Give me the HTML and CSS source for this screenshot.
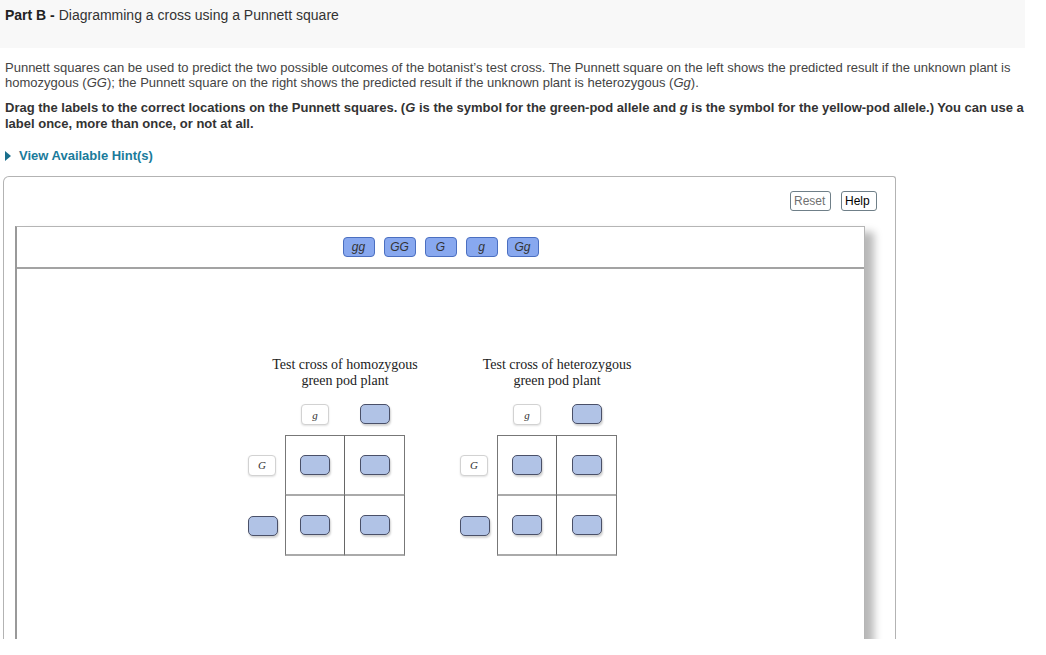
FILE: index.html
```html
<!DOCTYPE html>
<html>
<head>
<meta charset="utf-8">
<link rel="stylesheet" href="styles.css">
</head>
<body>
<div class="part-header"><b>Part B -</b> Diagramming a cross using a Punnett square</div>
<div class="content">
  <p class="intro">Punnett squares can be used to predict the two possible outcomes of the botanist’s test cross. The Punnett square on the left shows the predicted result if the unknown plant is homozygous (<i>GG</i>); the Punnett square on the right shows the predicted result if the unknown plant is heterozygous (<i>Gg</i>).</p>
  <p class="instr">Drag the labels to the correct locations on the Punnett squares. (<i>G</i> is the symbol for the green-pod allele and <i>g</i> is the symbol for the yellow-pod allele.) You can use a label once, more than once, or not at all.</p>
  <div class="hint"><span class="tri"></span>View Available Hint(s)</div>
  <div class="widget">
    <div class="buttons">
      <span class="btn btn-reset">Reset</span>
      <span class="btn btn-help">Help</span>
    </div>
    <div class="canvas">
      <div class="toolbar">
        <span class="chip"><i>gg</i></span>
        <span class="chip"><i>GG</i></span>
        <span class="chip"><i>G</i></span>
        <span class="chip"><i>g</i></span>
        <span class="chip"><i>Gg</i></span>
      </div>
      <div class="diagram">
        <div class="punnett">
          <div class="title"><span>Test cross of homozygous<br>green pod plant</span></div>
          <div class="head h1"><span class="lbl"><i>g</i></span></div>
          <div class="head h2"><span class="drop"></span></div>
          <div class="rowhead r1"><span class="lbl"><i>G</i></span></div>
          <div class="rowhead r2"><span class="drop"></span></div>
          <div class="cell c-tl"><span class="drop"></span></div>
          <div class="cell c-tr"><span class="drop"></span></div>
          <div class="cell c-bl"><span class="drop"></span></div>
          <div class="cell c-br"><span class="drop"></span></div>
        </div>
        <div class="punnett">
          <div class="title"><span>Test cross of heterozygous<br>green pod plant</span></div>
          <div class="head h1"><span class="lbl"><i>g</i></span></div>
          <div class="head h2"><span class="drop"></span></div>
          <div class="rowhead r1"><span class="lbl"><i>G</i></span></div>
          <div class="rowhead r2"><span class="drop"></span></div>
          <div class="cell c-tl"><span class="drop"></span></div>
          <div class="cell c-tr"><span class="drop"></span></div>
          <div class="cell c-bl"><span class="drop"></span></div>
          <div class="cell c-br"><span class="drop"></span></div>
        </div>
      </div>
    </div>
  </div>
</div>
</body>
</html>
```

FILE: styles.css
```css
html, body {
  margin: 0;
  padding: 0;
  background: #fff;
  overflow: hidden;
}
body {
  font-family: "Liberation Sans", Arial, sans-serif;
  color: #333;
  width: 1046px;
  height: 655px;
}
.part-header {
  width: 1025px;
  height: 48px;
  box-sizing: border-box;
  background: #f8f8f8;
  padding: 6px 5px 0;
  font-size: 14px;
  line-height: 18px;
  color: #333;
}
.part-header b { color: #222; }
.content {
  padding: 12px 0 0 5px;
  width: 1020px;
}
.intro {
  margin: 0;
  font-size: 13px;
  line-height: 15px;
  color: #444;
}
.instr {
  margin: 10px 0 0;
  font-size: 13px;
  line-height: 16px;
  font-weight: bold;
  color: #333;
}
.hint {
  margin-top: 16px;
  display: flex;
  align-items: center;
  font-size: 13px;
  font-weight: bold;
  color: #1a7b9b;
  line-height: 16px;
}
.tri {
  width: 0;
  height: 0;
  border-top: 5px solid transparent;
  border-bottom: 5px solid transparent;
  border-left: 6px solid #1a6f8c;
  margin-right: 8px;
}
.widget {
  margin: 12px 0 0 -2px;
  width: 893px;
  height: 463px;
  box-sizing: border-box;
  border: 1px solid #b3b3b3;
  border-bottom: none;
  border-top-left-radius: 6px;
  border-top-right-radius: 3px;
  padding: 14px 0 0 11px;
  overflow: hidden;
}
.buttons {
  display: flex;
  justify-content: flex-end;
  gap: 10px;
  padding-right: 18px;
  height: 20px;
}
.btn {
  box-sizing: border-box;
  height: 20px;
  border: 1px solid #6f7f88;
  border-radius: 3px;
  font-size: 12px;
  line-height: 18px;
  padding: 0 3px;
  background: #fff;
}
.btn-reset { color: #707070; width: 41px; }
.btn-help { color: #000; width: 36px; font-weight: 500; }
.canvas {
  margin-top: 15px;
  width: 850px;
  height: 520px;
  box-sizing: border-box;
  border: 1px solid #b5b5b5;
  border-left: 2px solid #999;
  box-shadow: 9px 6px 8px rgba(0,0,0,0.28);
  background: #fff;
}
.toolbar {
  height: 42px;
  box-sizing: border-box;
  border-bottom: 2px solid #a3a3a3;
  display: flex;
  justify-content: center;
  align-items: center;
  gap: 9px;
}
.chip {
  box-sizing: border-box;
  width: 32px;
  height: 20px;
  background: #88a8ef;
  border: 1px solid #4b6fc0;
  border-radius: 4px;
  font-size: 12px;
  color: #333;
  display: flex;
  align-items: center;
  justify-content: center;
}
.diagram {
  display: flex;
  gap: 55px;
  padding: 88px 0 0 231px;
}
.punnett {
  display: grid;
  grid-template-columns: 37px 60px 60px;
  grid-template-rows: 32px 15px 20px 11px 60px 61px;
}
.title {
  grid-column: 2 / 4;
  grid-row: 1;
  display: flex;
  justify-content: center;
  font-family: "Liberation Serif", "Times New Roman", serif;
  font-size: 14px;
  line-height: 16px;
  color: #222;
  white-space: nowrap;
  text-align: center;
}
.head {
  grid-row: 3;
  display: flex;
  justify-content: center;
}
.h1 { grid-column: 2; }
.h2 { grid-column: 3; }
.rowhead {
  grid-column: 1;
  display: flex;
  align-items: center;
}
.r1 { grid-row: 5; }
.r2 { grid-row: 6; }
.cell {
  display: flex;
  align-items: center;
  justify-content: center;
  box-sizing: border-box;
}
.c-tl { grid-row: 5; grid-column: 2; border-top: 1px solid #777; border-left: 1px solid #777; border-right: 1px solid #666; border-bottom: 2px solid #aaa; margin-bottom: -1px; }
.c-tr { grid-row: 5; grid-column: 3; border-top: 1px solid #777; border-right: 1px solid #777; border-bottom: 2px solid #aaa; margin-bottom: -1px; }
.c-bl { grid-row: 6; grid-column: 2; border-left: 1px solid #777; border-right: 1px solid #666; border-bottom: 2px solid #aaa; padding-top: 1px; }
.c-br { grid-row: 6; grid-column: 3; border-right: 1px solid #777; border-bottom: 2px solid #aaa; padding-top: 1px; }
.lbl {
  box-sizing: border-box;
  width: 28px;
  height: 21px;
  background: #fff;
  border: 1px solid #d2d2d2;
  border-radius: 4px;
  box-shadow: 0 1px 2px rgba(0,0,0,0.12);
  display: flex;
  align-items: center;
  justify-content: center;
  font-family: "Liberation Serif", "Times New Roman", serif;
  font-size: 11px;
  color: #333;
}
.drop {
  box-sizing: border-box;
  width: 30px;
  height: 20px;
  background: #b1c3e6;
  border: 1px solid #4a5068;
  border-radius: 5px;
  box-shadow: 1px 2px 2px rgba(0,0,0,0.18);
}
```
